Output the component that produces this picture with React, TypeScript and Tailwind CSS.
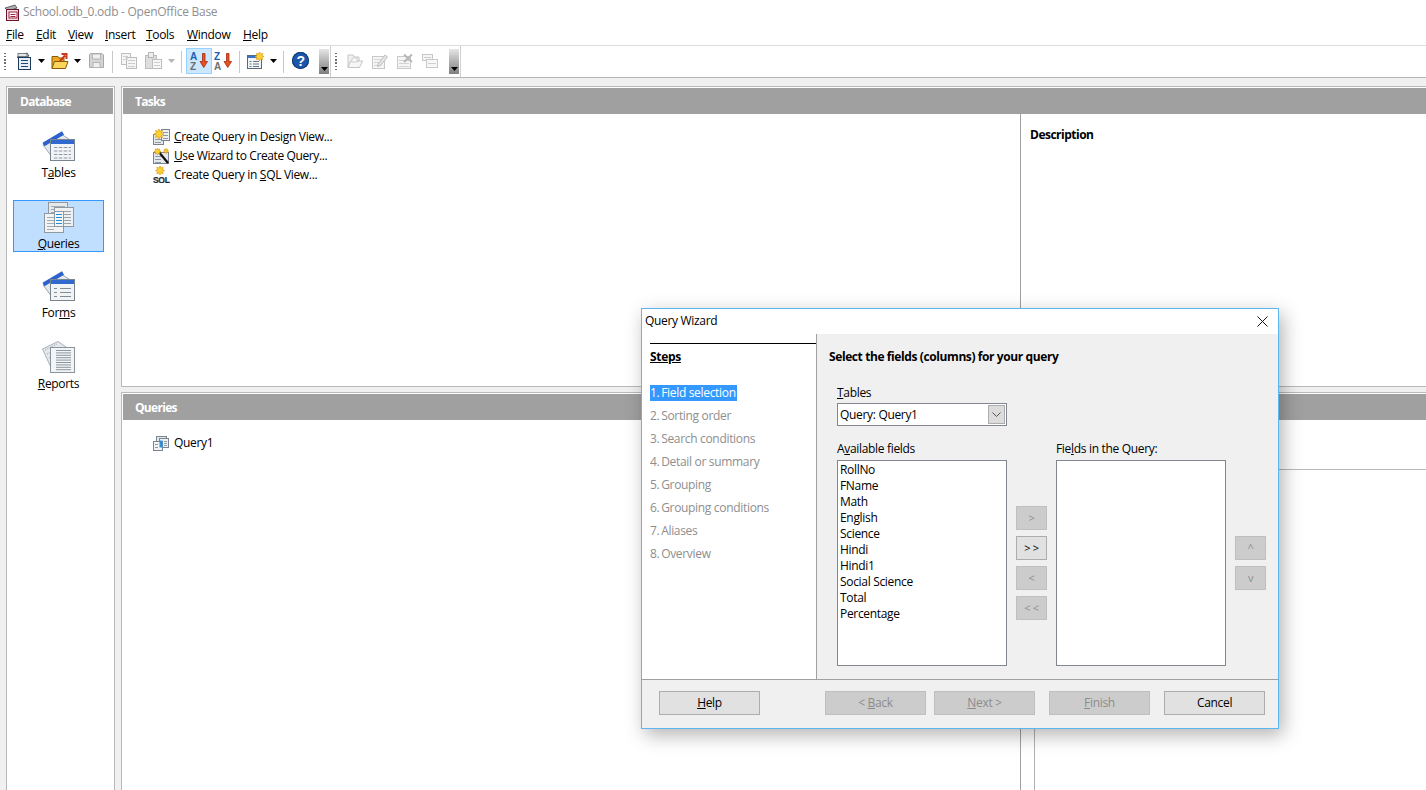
import type { ReactNode } from "react";

const Star = ({ x, y, r = 5 }: { x: number; y: number; r?: number }) => {
  const pts: string[] = [];
  for (let i = 0; i < 16; i++) {
    const a = (i * Math.PI) / 8;
    const d = i % 2 ? r * 0.58 : r;
    pts.push(`${x + Math.cos(a) * d},${y + Math.sin(a) * d}`);
  }
  return <polygon points={pts.join(" ")} fill="#f9d32f" stroke="#e39a12" strokeWidth="0.7" />;
};

const Ico = ({ w, h, className = "", children }: { w: number; h: number; className?: string; children: ReactNode }) => (
  <svg width={w} height={h} viewBox={`0 0 ${w} ${h}`} className={`block shrink-0 ${className}`}>
    {children}
  </svg>
);

const Lines = ({ x, y, w, n, gap = 3, c = "#9aa3ab" }: { x: number; y: number; w: number; n: number; gap?: number; c?: string }) => (
  <>
    {Array.from({ length: n }).map((_, i) => (
      <line key={i} x1={x} x2={x + w} y1={y + i * gap + 0.5} y2={y + i * gap + 0.5} stroke={c} />
    ))}
  </>
);

// small toolbar icons
const NewDocIcon = () => (
  <Ico w={16} h={18}>
    <path d="M1 5 L11 1 L13 4 L4 8Z" fill="#b8c2cb" stroke="#3a4650" strokeWidth="0.8" />
    <rect x="2.5" y="5.5" width="12" height="12" fill="#e8eef4" stroke="#1c3a5a" />
    <rect x="2" y="1.5" width="9" height="3" fill="#dfe5ea" stroke="#4a5660" strokeWidth="0.7" />
    <Lines x={5} y={8} w={7} n={3} gap={3} c="#1c4a78" />
  </Ico>
);
const FolderIcon = () => (
  <Ico w={18} h={18}>
    <path d="M1 4.5 H7 L8 6 H13 V16.5 H1Z" fill="#e8a91e" stroke="#8a5a08" />
    <path d="M1 16.5 L3.5 9.5 H17 L14.5 16.5Z" fill="#fbd65a" stroke="#8a5a08" />
    <path d="M9 9 L14 3.5 M10.5 2 H15.5 V7" fill="none" stroke="#c8381a" strokeWidth="2" />
  </Ico>
);
const SaveIcon = () => (
  <Ico w={15} h={15}>
    <path d="M1.5 .5 H13 L14.5 2 V14.5 H.5 V1.5Z" fill="#d4d4d4" stroke="#a8a8a8" />
    <rect x="3.5" y="1" width="8" height="5" fill="#f1f1f1" stroke="#b5b5b5" />
    <rect x="4" y="9.5" width="7" height="5" fill="#eeeeee" stroke="#b5b5b5" />
  </Ico>
);
const CopyIcon = () => (
  <Ico w={16} h={16}>
    <rect x=".5" y=".5" width="9" height="11" fill="#f5f5f5" stroke="#c0c0c0" />
    <rect x="5.5" y="4.5" width="10" height="11" fill="#f5f5f5" stroke="#bcbcbc" />
    <Lines x={2} y={3} w={5} n={2} c="#d0d0d0" />
    <Lines x={7} y={7} w={7} n={3} c="#cccccc" />
  </Ico>
);
const PasteIcon = () => (
  <Ico w={17} h={17}>
    <rect x=".5" y="3.5" width="11" height="13" fill="#dedede" stroke="#bcbcbc" />
    <rect x="3.5" y=".5" width="5" height="5" fill="#eeeeee" stroke="#b5b5b5" />
    <rect x="7.5" y="7.5" width="9" height="9" fill="#f7f7f7" stroke="#bcbcbc" />
    <Lines x={9} y={10} w={6} n={2} c="#cccccc" />
  </Ico>
);
const SortIcon = ({ top, bottom }: { top: string; bottom: string }) => (
  <Ico w={18} h={20}>
    <text x="0" y="9" fontSize="10" fontWeight="700" fontFamily="Liberation Sans" fill="#1a5fb4">
      {top}
    </text>
    <text x="0" y="19" fontSize="10" fontWeight="700" fontFamily="Liberation Sans" fill="#6f6f6f">
      {bottom}
    </text>
    <path d="M12.5 2.5 H15 V10.5 H17.5 L13.75 16.5 L10 10.5 H12.5Z" fill="#e8501e" stroke="#a52a10" strokeWidth="0.8" />
  </Ico>
);
const NewFormIcon = () => (
  <Ico w={18} h={18}>
    <rect x=".5" y="3.5" width="14" height="13" fill="#f2f5f8" stroke="#5a6a7a" />
    <rect x="1" y="4" width="13" height="2" fill="#3a76c8" />
    <Lines x={6} y={9} w={6} n={3} gap={2.5} c="#6a7885" />
    <Lines x={2.5} y={9} w={2} n={3} gap={2.5} c="#6a7885" />
    <Star x={12.5} y={4.5} r={4.5} />
  </Ico>
);
const HelpIcon = () => (
  <div className="flex h-[17px] w-[17px] shrink-0 items-center justify-center rounded-full bg-[#1c56a8] text-[14px] leading-none font-bold text-white [font-family:'Liberation_Sans',sans-serif] shadow-[inset_0_0_0_1px_#103a78]">
    ?
  </div>
);
const GrayFolder = () => (
  <Ico w={16} h={16}>
    <path d="M1 2 H6 L7 4 H12 V14.5 H1Z" fill="#f2f2f2" stroke="#c4c4c4" />
    <path d="M1 14.5 L3.5 8 H15.5 L12.5 14.5Z" fill="#f6f6f6" stroke="#c4c4c4" />
    <rect x="5" y="5" width="5" height="4" fill="#f9f9f9" stroke="#cfcfcf" />
  </Ico>
);
const GrayEdit = () => (
  <Ico w={16} h={16}>
    <rect x=".5" y="3.5" width="12" height="12" fill="#f5f5f5" stroke="#c8c8c8" />
    <Lines x={2} y={6} w={7} n={3} c="#d6d6d6" />
    <path d="M6 11 L13 2 L15.5 4 L8.5 12.5 L5.5 13.5Z" fill="#e4e4e4" stroke="#bdbdbd" />
  </Ico>
);
const GrayDelete = () => (
  <Ico w={17} h={16}>
    <rect x=".5" y="3.5" width="13" height="12" fill="#f5f5f5" stroke="#c8c8c8" />
    <Lines x={2} y={7} w={10} n={3} c="#d2d2d2" />
    <path d="M7 1.5 L15 9 M15 1.5 L7 9" stroke="#b8b8b8" strokeWidth="2" />
  </Ico>
);
const GrayRename = () => (
  <Ico w={16} h={14}>
    <rect x=".5" y=".5" width="10" height="6" fill="#f5f5f5" stroke="#c8c8c8" />
    <rect x="4.5" y="5.5" width="11" height="8" fill="#f7f7f7" stroke="#c8c8c8" />
    <Lines x={2} y={3} w={7} n={1} c="#cfcfcf" />
    <Lines x={6} y={9} w={8} n={1} c="#cfcfcf" />
  </Ico>
);
const Drop = ({ light = false }: { light?: boolean }) => (
  <Ico w={7} h={4}>
    <polygon points="0,0 7,0 3.5,4" fill={light ? "#b5b5b5" : "#000"} />
  </Ico>
);
const Sep = ({ ml }: { ml: string }) => <div className={`mt-[2px] h-[22px] w-px shrink-0 bg-[#c8c8c8] ${ml}`} />;
const Grip = ({ ml }: { ml: string }) => (
  <div className={`mt-[2px] flex h-[18px] w-[2px] shrink-0 flex-col justify-between ${ml}`}>
    {[0, 1, 2, 3, 4, 5].map((i) => (
      <div key={i} className="h-[1.5px] w-[2px] bg-[#6f6f6f]" />
    ))}
  </div>
);
const Overflow = ({ ml }: { ml: string }) => (
  <div className={`mt-[2px] flex h-[25px] w-[10px] shrink-0 items-end justify-center bg-gradient-to-b from-[#e6e6e6] to-[#7f7f7f] pb-[3px] ${ml}`}>
    <Drop />
  </div>
);
const BarEnd = () => <div className="ml-px mt-[2px] h-[31px] w-px shrink-0 bg-[#cfcfcf]" />;

// sidebar icons
const Fan = () => (
  <>
    <path d="M1 14 L19 3 L30 10 V26 H10Z" fill="#e4e9ee" stroke="#a0a8b0" />
    <path d="M1.5 13.5 L21 2" stroke="#2b62cc" strokeWidth="4" />
    <rect x="8.5" y="8.5" width="24" height="21" fill="#f1f3f5" stroke="#78848f" />
    <rect x="9" y="9" width="23" height="4" fill="#2f68cf" />
  </>
);
const TablesIcon = () => (
  <Ico w={33} h={31}>
    <Fan />
    <Lines x={12} y={16} w={17} n={4} gap={3.5} c="#8d99a5" />
    {[16, 21, 26].map((x) => (
      <line key={x} x1={x} x2={x} y1={15} y2={28} stroke="#f1f3f5" strokeWidth="1.4" />
    ))}
  </Ico>
);
const FormsIcon = () => (
  <Ico w={33} h={31}>
    <Fan />
    <Lines x={12} y={17} w={3} n={3} gap={4} c="#7f8c99" />
    <Lines x={18} y={17} w={11} n={3} gap={4} c="#7f8c99" />
  </Ico>
);
const ReportsIcon = () => (
  <Ico w={33} h={32}>
    <path d="M.5 8 L16 .5 L24 6 V20 L11 31Z" fill="#e4e8ec" stroke="#a8afb6" />
    <path d="M3 9 L15 3 M5 13 L9 11 M7 17 L9 16 M9 21 L9 21" stroke="#a8b0b8" strokeDasharray="1.5 1" />
    <rect x="8.5" y="6.5" width="24" height="25" fill="#f3f4f5" stroke="#8a949d" />
    <Lines x={14} y={9} w={15} n={9} gap={2.4} c="#8c96a0" />
  </Ico>
);
const QueriesIcon = () => (
  <Ico w={30} h={31} className="mt-px">
    <rect x="4.5" y=".5" width="19" height="19" fill="#e6e9ec" stroke="#8f99a2" />
    <Lines x={7} y={4} w={14} n={4} c="#a2abb3" />
    <rect x="10.5" y="5.5" width="19" height="19" fill="#eef0f2" stroke="#8f99a2" />
    <Lines x={20} y={9} w={7} n={5} c="#98a2ab" />
    <rect x=".5" y="11.5" width="19" height="19" fill="#f2f3f5" stroke="#8f99a2" />
    <Lines x={3} y={15} w={7} n={5} c="#a2abb3" />
    <rect x="10.5" y="9.5" width="9" height="15" fill="#f3f5f7" stroke="#8f99a2" />
    <Lines x={12} y={12} w={6} n={4} c="#1f8fd8" />
  </Ico>
);
const DesignIcon = () => (
  <Ico w={17} h={16}>
    <rect x=".5" y="5.5" width="10" height="10" fill="#e4e8ec" stroke="#78848f" />
    <rect x="8.5" y=".5" width="8" height="11" fill="#eef0f2" stroke="#78848f" />
    <Lines x={10} y={3} w={5} n={3} c="#8d99a5" />
    <Lines x={2} y={10} w={6} n={2} c="#8d99a5" />
    <Star x={6} y={5} r={5} />
  </Ico>
);
const WizardIcon = () => (
  <Ico w={17} h={16}>
    <rect x=".5" y="4.5" width="15" height="11" fill="#e4e8ec" stroke="#78848f" />
    <Lines x={2} y={8} w={6} n={3} c="#8d99a5" />
    <path d="M5 3 L15 15" stroke="#111" strokeWidth="2.2" />
    <Star x={4.5} y={3.5} r={3.5} />
    <Star x={13} y={3} r={2.5} />
  </Ico>
);
const SqlIcon = () => (
  <Ico w={17} h={17}>
    <Star x={7} y={4.5} r={4.5} />
    <text x="0" y="16.5" fontSize="8.5" fontWeight="700" fontFamily="Liberation Sans" fill="#1c2a36" stroke="#1c2a36" strokeWidth="0.2">
      SQL
    </text>
  </Ico>
);
const QuerySmallIcon = () => (
  <Ico w={16} h={15}>
    <rect x="3.5" y=".5" width="10" height="9" fill="#e6e9ec" stroke="#78848f" />
    <rect x="6.5" y="2.5" width="9" height="9" fill="#eef0f2" stroke="#78848f" />
    <rect x=".5" y="5.5" width="9" height="9" fill="#f2f3f5" stroke="#78848f" />
    <rect x="6.5" y="4.5" width="3" height="7" fill="#2c8fd8" />
    <Lines x={2} y={8} w={3} n={2} c="#8d99a5" />
    <Lines x={11} y={5} w={3} n={3} gap={2} c="#8d99a5" />
  </Ico>
);

const menus: [string, string, string][] = [
  ["F", "ile", "w-[30px]"],
  ["E", "dit", "w-[32px]"],
  ["V", "iew", "w-[37px]"],
  ["I", "nsert", "w-[41px]"],
  ["T", "ools", "w-[41px]"],
  ["W", "indow", "w-[56px]"],
  ["H", "elp", "w-[30px]"],
];

const steps = ["Sorting order", "Search conditions", "Detail or summary", "Grouping", "Grouping conditions", "Aliases", "Overview"];
const fields = ["RollNo", "FName", "Math", "English", "Science", "Hindi", "Hindi1", "Social Science", "Total", "Percentage"];

const PanelHead = ({ title }: { title: string }) => (
  <div className="flex h-[26px] items-center bg-[#a0a0a0] pl-[12px] pt-px font-bold tracking-[-0.7px] text-white">{title}</div>
);

const SideItem = ({ icon, label, active = false }: { icon: ReactNode; label: ReactNode; active?: boolean }) => (
  <div className={`flex h-[52px] w-[91px] flex-col items-center border ${active ? "border-[#3399ff] bg-[#c0dfff]" : "border-transparent"}`}>
    <div className="flex h-[35px] items-start justify-center">{icon}</div>
    <div className="mt-[3px] leading-[16px]">{label}</div>
  </div>
);

const SmallBtn = ({ label, on = false }: { label: string; on?: boolean }) => (
  <div className={`flex h-[24px] w-[31px] items-center justify-center border text-[11px] ${on ? "border-[#adadad] bg-[#e1e1e1] text-black" : "border-[#bfbfbf] bg-[#cccccc] text-[#8f8f8f]"}`}>
    {label}
  </div>
);

const FootBtn = ({ children, on = false, ml = "" }: { children: ReactNode; on?: boolean; ml?: string }) => (
  <div className={`flex h-[24px] w-[101px] shrink-0 items-center justify-center border ${ml} ${on ? "border-[#adadad] bg-[#e1e1e1] text-black" : "border-[#bfbfbf] bg-[#cccccc] text-[#8c8c8c]"}`}>
    <span>{children}</span>
  </div>
);

export default function App() {
  return (
    <div className="relative h-[790px] w-[1426px] overflow-hidden bg-[#f0f0f0] text-[12px] tracking-[-0.32px] text-black [font-family:'Open_Sans',sans-serif]">
      {/* title bar */}
      <div className="flex h-[24px] items-center bg-white pl-[4px]">
        <Ico w={16} h={17}>
          <path d="M1 4 L11 1 L13 4 L4 7Z" fill="#aab0b5" stroke="#333" strokeWidth="0.7" />
          <rect x="2.5" y="5.5" width="12" height="11" fill="#f2dfe2" stroke="#6a1228" />
          <rect x="5" y="8" width="8" height="6" fill="#fff" stroke="#9c2442" />
          <Lines x={6.5} y={10} w={5} n={2} gap={2} c="#9c2442" />
        </Ico>
        <span className="ml-[3px] tracking-[-0.26px] text-[#8f8f8f]">School.odb_0.odb - OpenOffice Base</span>
      </div>
      {/* menu */}
      <div className="flex h-[21px] items-center bg-white pl-[6px]">
        {menus.map(([k, rest, w]) => (
          <span key={k} className={`shrink-0 ${w}`}>
            <u>{k}</u>
            {rest}
          </span>
        ))}
      </div>
      {/* toolbars */}
      <div className="flex h-[33px] items-center border-y border-t-[#dcdcdc] border-b-[#b4b4b4] bg-white pb-[2px]">
        <Grip ml="ml-[4px]" />
        <div className="ml-[10px]"><NewDocIcon /></div>
        <div className="ml-[6px]"><Drop /></div>
        <div className="ml-[6px]"><FolderIcon /></div>
        <div className="ml-[5px]"><Drop /></div>
        <div className="ml-[8px]"><SaveIcon /></div>
        <Sep ml="ml-[8px]" />
        <div className="ml-[8px]"><CopyIcon /></div>
        <div className="ml-[8px]"><PasteIcon /></div>
        <div className="ml-[6px]"><Drop light /></div>
        <Sep ml="ml-[6px]" />
        <div className="ml-[4px] flex h-[26px] w-[26px] shrink-0 items-center justify-center border border-[#99d1ff] bg-[#cce8ff]">
          <SortIcon top="A" bottom="Z" />
        </div>
        <div className="ml-[2px]"><SortIcon top="Z" bottom="A" /></div>
        <Sep ml="ml-[7px]" />
        <div className="ml-[7px]"><NewFormIcon /></div>
        <div className="ml-[5px]"><Drop /></div>
        <Sep ml="ml-[6px]" />
        <div className="ml-[8px]"><HelpIcon /></div>
        <Overflow ml="ml-[10px]" />
        <BarEnd />
        <Grip ml="ml-[4px]" />
        <div className="ml-[10px]"><GrayFolder /></div>
        <div className="ml-[9px]"><GrayEdit /></div>
        <div className="ml-[9px]"><GrayDelete /></div>
        <div className="ml-[8px]"><GrayRename /></div>
        <Overflow ml="ml-[11px]" />
        <BarEnd />
      </div>
      {/* main */}
      <div className="flex h-[704px] gap-[6px] pl-[6px] pt-[8px]">
        <div className="h-[720px] w-[109px] shrink-0 border border-[#b9b9b9] bg-white p-px">
          <PanelHead title="Database" />
          <div className="flex flex-col gap-[18px] pl-[5px] pt-[16px]">
            <SideItem icon={<TablesIcon />} label={<>T<u>a</u>bles</>} />
            <SideItem active icon={<QueriesIcon />} label={<><u>Q</u>ueries</>} />
            <SideItem icon={<FormsIcon />} label={<>For<u>m</u>s</>} />
            <SideItem icon={<ReportsIcon />} label={<><u>R</u>eports</>} />
          </div>
        </div>
        <div className="flex flex-1 flex-col gap-[5px]">
          <div className="h-[301px] border border-r-0 border-[#b9b9b9] bg-white p-px pr-0">
            <PanelHead title="Tasks" />
            <div className="flex h-[271px]">
              <div className="w-[898px] border-r border-[#a0a0a0] pl-[30px] pt-[13px]">
                <div className="flex h-[19px] items-center gap-[4px]"><DesignIcon /><span><u>C</u>reate Query in Design View...</span></div>
                <div className="flex h-[19px] items-center gap-[4px]"><WizardIcon /><span className="tracking-[-0.39px]"><u>U</u>se Wizard to Create Query...</span></div>
                <div className="flex h-[19px] items-center gap-[4px]"><SqlIcon /><span>Create Query in <u>S</u>QL View...</span></div>
              </div>
              <div className="pl-[9px] pt-[13px] font-bold leading-[16px] tracking-[-0.5px]">Description</div>
            </div>
          </div>
          <div className="h-[400px] border border-r-0 border-[#b9b9b9] bg-white p-px pr-0">
            <PanelHead title="Queries" />
            <div className="flex h-[370px]">
              <div className="w-[898px] border-r border-[#a0a0a0] pl-[30px] pt-[15px]">
                <div className="flex h-[16px] items-center gap-[5px]"><QuerySmallIcon /><span>Query1</span></div>
              </div>
              <div className="ml-[13px] flex-1 border-l border-[#b0b0b0]">
                <div className="h-[50px] border-b border-[#b9b9b9]" />
              </div>
            </div>
          </div>
        </div>
      </div>
      {/* query wizard dialog */}
      <div className="absolute left-[641px] top-[308px] flex h-[421px] w-[638px] flex-col border border-[#5db6ef] bg-[#f0f0f0] shadow-[4px_6px_18px_rgba(0,0,0,0.3)]">
        <div className="flex h-[25px] shrink-0 items-center justify-between bg-white pb-px pl-[3px] pr-[10px]">
          <span>Query Wizard</span>
          <Ico w={11} h={11}>
            <path d="M.5 .5 L10.5 10.5 M10.5 .5 L.5 10.5" stroke="#111" strokeWidth="1" />
          </Ico>
        </div>
        <div className="flex h-[345px] shrink-0">
          <div className="w-[175px] shrink-0 border-r border-[#a0a0a0] bg-white pl-[8px] pt-[9px]">
            <div className="border-t border-black pt-[5px] font-bold leading-[16px]"><u>Steps</u></div>
            <div className="mt-[20px] flex h-[16px] w-fit items-center bg-[#3399ff] pr-px leading-[16px] text-white">
              <span className="mr-[-1px] whitespace-pre">1. </span>Field selection
            </div>
            <div className="mt-[7px] flex flex-col gap-[7px] leading-[16px] text-[#8e8e8e]">
              {steps.map((s, i) => (
                <div key={s}>
                  <span className="mr-[-1px] whitespace-pre">{`${i + 2}. `}</span>
                  {s}
                </div>
              ))}
            </div>
          </div>
          <div className="flex-1 pl-[12px] pt-[15px]">
            <div className="font-bold leading-[16px] tracking-[-0.4px]">Select the fields (columns) for your query</div>
            <div className="ml-[8px] mt-[20px] leading-[16px]"><u>T</u>ables</div>
            <div className="ml-[8px] mt-[2px] flex h-[23px] w-[170px] items-center justify-between border border-[#82878f] bg-white pl-[2px] pr-px shadow-[inset_0_0_0_1px_#fff]">
              <span>Query: Query1</span>
              <div className="flex h-[19px] w-[17px] items-center justify-center border border-[#adadad] bg-[#dcdcdc]">
                <Ico w={9} h={5}>
                  <path d="M.5 .5 L4.5 4.5 L8.5 .5" fill="none" stroke="#555" />
                </Ico>
              </div>
            </div>
            <div className="ml-[8px] mt-[15px] flex">
              <div className="w-[170px] shrink-0">
                <div className="h-[19px] leading-[16px]">A<u>v</u>ailable fields</div>
                <div className="h-[206px] border border-[#82878f] bg-white pl-[2px] pt-[1px] leading-[16px]">
                  {fields.map((f) => (
                    <div key={f}>{f}</div>
                  ))}
                </div>
              </div>
              <div className="ml-[9px] flex w-[31px] shrink-0 flex-col gap-[6px] pt-[65px]">
                <SmallBtn label=">" />
                <SmallBtn label="> >" on />
                <SmallBtn label="<" />
                <SmallBtn label="< <" />
              </div>
              <div className="ml-[9px] w-[170px] shrink-0">
                <div className="h-[19px] leading-[16px]">Fie<u>l</u>ds in the Query:</div>
                <div className="h-[206px] border border-[#82878f] bg-white" />
              </div>
              <div className="ml-[9px] flex w-[31px] shrink-0 flex-col gap-[6px] pt-[95px]">
                <SmallBtn label="^" />
                <SmallBtn label="v" />
              </div>
            </div>
          </div>
        </div>
        <div className="flex h-[49px] shrink-0 items-start border-t border-[#a0a0a0] pl-[17px] pt-[11px]">
          <FootBtn on><u>H</u>elp</FootBtn>
          <FootBtn ml="ml-[65px]">&lt; <u>B</u>ack</FootBtn>
          <FootBtn ml="ml-[8px]"><u>N</u>ext &gt;</FootBtn>
          <FootBtn ml="ml-[14px]"><u>F</u>inish</FootBtn>
          <FootBtn on ml="ml-[14px]">Cancel</FootBtn>
        </div>
      </div>
    </div>
  );
}
